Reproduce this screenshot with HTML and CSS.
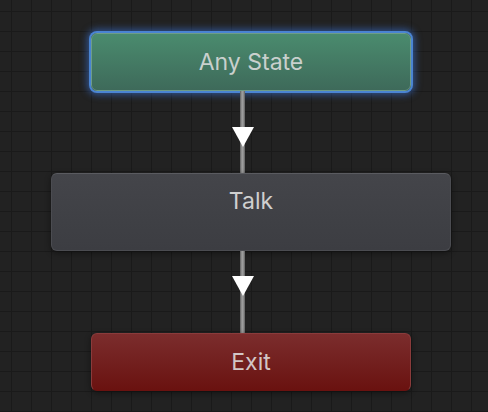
FILE: index.html
```html
<!DOCTYPE html>
<html>
<head>
<meta charset="utf-8">
<link rel="stylesheet" href="styles.css">
</head>
<body>
<div class="graph">
  <div class="node node-any">Any State</div>
  <div class="connector conn-1">
    <div class="line"></div>
    <svg class="arrow" width="22" height="20" viewBox="0 0 22 20"><polygon points="0,0 22,0 11,20" fill="#ffffff"/></svg>
  </div>
  <div class="node node-talk">Talk</div>
  <div class="connector conn-2">
    <div class="line"></div>
    <svg class="arrow" width="22" height="20" viewBox="0 0 22 20"><polygon points="0,0 22,0 11,20" fill="#ffffff"/></svg>
  </div>
  <div class="node node-exit">Exit</div>
</div>
</body>
</html>
```
FILE: styles.css
```css
html, body {
  margin: 0;
  padding: 0;
  width: 488px;
  height: 412px;
  overflow: hidden;
}
body {
  background-color: #222222;
  background-image:
    linear-gradient(to right, transparent 11px, #1a1a1a 11px, #1a1a1a 12px, transparent 12px),
    linear-gradient(to bottom, transparent 11px, #1a1a1a 11px, #1a1a1a 12px, transparent 12px);
  background-size: 20px 20px;
  font-family: Inter, "Noto Sans", sans-serif;
}
.graph {
  display: flex;
  flex-direction: column;
  align-items: center;
  padding-top: 33px;
  padding-left: 14px;
}
.node {
  display: flex;
  align-items: center;
  justify-content: center;
  box-sizing: border-box;
  border-radius: 6px;
  font-size: 23px;
  line-height: 26px;
  color: #c8c8c8;
  box-shadow: 0 2px 6px rgba(0, 0, 0, 0.45);
}
.node-any {
  width: 320px;
  height: 58px;
  background: linear-gradient(to bottom, #4a8b6e, #3e6a5a);
  border: 1px solid #6e9c88;
  color: #c9d0cd;
  box-shadow: 0 0 0 2px #4a84d2, 0 0 7px 4px rgba(60, 120, 225, 0.55);
}
.node-talk {
  width: 400px;
  height: 78px;
  align-items: flex-start;
  padding-top: 14px;
  background: linear-gradient(to bottom, #44454a, #3c3d42);
  border: 1px solid #4b4c51;
  border-top-color: #5a5b60;
  color: #cfcfcf;
}
.node-exit {
  width: 320px;
  height: 58px;
  background: linear-gradient(to bottom, #7b2d2d, #6a1210);
  border: 1px solid #8a3b3b;
  border-bottom-color: #6a1210;
  color: #d2c6c6;
}
.connector {
  display: grid;
  justify-items: center;
  height: 82px;
  width: 22px;
  margin-right: 17px;
}
.connector > * {
  grid-area: 1 / 1;
}
.line {
  width: 5px;
  height: 100%;
  background: linear-gradient(to right, #5e5e5e, #9c9c9c 40%, #9c9c9c 60%, #5e5e5e);
}
.arrow {
  display: block;
  align-self: start;
}
.conn-1 .arrow {
  margin-top: 36px;
}
.conn-2 .arrow {
  margin-top: 25px;
}
```
